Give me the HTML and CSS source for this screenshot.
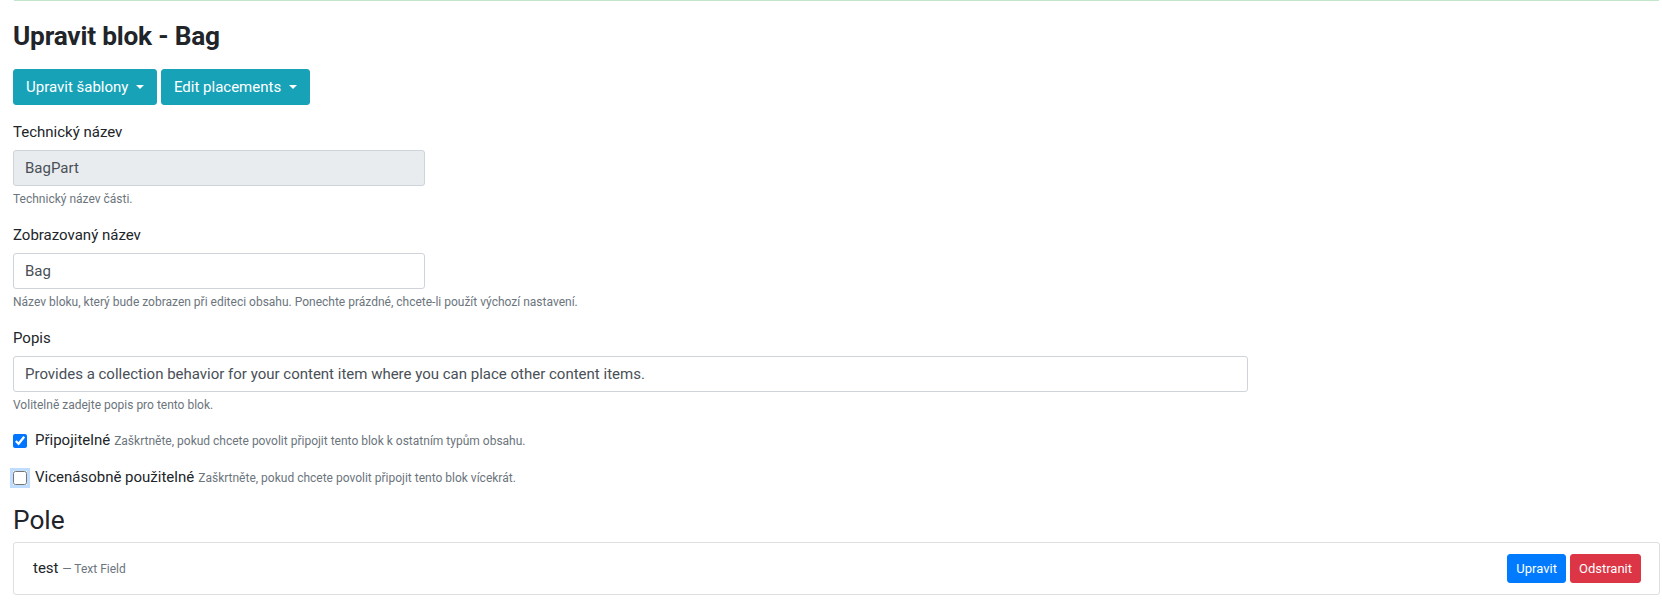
FILE: index.html
```html
<!DOCTYPE html>
<html lang="cs">
<head>
<meta charset="utf-8">
<title>Upravit blok - Bag</title>
<link rel="stylesheet" href="styles.css">
</head>
<body>
<div class="page">
  <div class="alert-edge"></div>
  <h1 class="title">Upravit blok - Bag</h1>
  <div class="toolbar">
    <button class="btn btn-info dropdown-toggle" type="button">Upravit šablony</button>
    <button class="btn btn-info dropdown-toggle" type="button">Edit placements</button>
  </div>

  <div class="form-group narrow">
    <label class="label">Technický název</label>
    <input class="input" type="text" value="BagPart" disabled>
    <small class="hint">Technický název části.</small>
  </div>

  <div class="form-group narrow">
    <label class="label">Zobrazovaný název</label>
    <input class="input" type="text" value="Bag">
    <small class="hint">Název bloku, který bude zobrazen při editeci obsahu. Ponechte prázdné, chcete-li použít výchozí nastavení.</small>
  </div>

  <div class="form-group wide">
    <label class="label">Popis</label>
    <input class="input input-desc" type="text" value="Provides a collection behavior for your content item where you can place other content items.">
    <small class="hint">Volitelně zadejte popis pro tento blok.</small>
  </div>

  <div class="check-row">
    <input class="check" type="checkbox" checked>
    <label class="check-label">Připojitelné</label>
    <span class="check-hint">Zaškrtněte, pokud chcete povolit připojit tento blok k ostatním typům obsahu.</span>
  </div>

  <div class="check-row">
    <input class="check check-focus" type="checkbox">
    <label class="check-label">Vicenásobně použitelné</label>
    <span class="check-hint">Zaškrtněte, pokud chcete povolit připojit tento blok vícekrát.</span>
  </div>

  <h2 class="section">Pole</h2>
  <div class="card">
    <div class="field-name"><span class="name">test</span> <span class="type">— Text Field</span></div>
    <div class="actions">
      <button class="btn btn-sm btn-primary" type="button">Upravit</button>
      <button class="btn btn-sm btn-danger" type="button">Odstranit</button>
    </div>
  </div>
</div>
</body>
</html>
```

FILE: styles.css
```css
* { box-sizing: border-box; }

html, body {
  margin: 0;
  padding: 0;
  background: #fff;
}

body {
  font-family: Roboto, "Noto Sans", "DejaVu Sans", sans-serif;
  font-size: 15px;
  line-height: 1.5;
  color: #212529;
}

.page {
  padding: 0 2px 0 13px;
}

.alert-edge {
  height: 1px;
  margin: 0 1px;
  background: #c3e6cb;
}

.title {
  margin: 20px 0 0;
  font-size: 26.25px;
  line-height: 1.2;
  font-weight: 700;
  letter-spacing: -0.2px;
}

.toolbar {
  display: flex;
  gap: 4px;
  margin-top: 16px;
}

.btn {
  font-family: inherit;
  font-size: 15px;
  line-height: 22px;
  padding: 6px 12px;
  border: 1px solid transparent;
  border-radius: 3px;
  color: #fff;
  cursor: pointer;
}

.btn-info {
  background: #17a2b8;
  border-color: #17a2b8;
}

.dropdown-toggle::after {
  content: "";
  display: inline-block;
  margin-left: 0.5em;
  vertical-align: 0.2em;
  border-top: 0.3em solid;
  border-right: 0.3em solid transparent;
  border-left: 0.3em solid transparent;
}

.form-group {
  display: flex;
  flex-direction: column;
  margin-top: 16px;
}

.narrow { width: 25%; }
.wide { width: 75%; }

.label {
  line-height: 22px;
  margin-bottom: 7px;
}

.input {
  height: 36px;
  padding: 6px 11px;
  font-family: inherit;
  font-size: 15px;
  color: #495057;
  background: #fff;
  border: 1px solid #ced4da;
  border-radius: 3px;
}

.input:disabled {
  background: #e9ecef;
  color: #495057;
}

.hint {
  margin-top: 4px;
  font-size: 12px;
  line-height: 18px;
  color: #6c757d;
  white-space: nowrap;
}

.check-row {
  display: flex;
  align-items: center;
  height: 22px;
  margin-top: 16px;
}

.check-row + .check-row {
  margin-top: 15px;
}

.check {
  width: 14px;
  height: 14px;
  margin: 0 8px 0 0;
  accent-color: #0075ff;
}

.check-focus {
  outline: 3px solid rgba(0, 123, 255, 0.25);
  outline-offset: 0;
  border-radius: 3px;
}

.check-label {
  font-size: 15px;
}

.check-hint {
  margin-left: 4px;
  font-size: 12px;
  color: #6c757d;
}

.section {
  margin: 16px 0 6px;
  font-size: 26.25px;
  line-height: 1.2;
  font-weight: 400;
}

.card {
  display: flex;
  align-items: center;
  justify-content: space-between;
  padding: 11px 18px 11px 19px;
  border: 1px solid rgba(0, 0, 0, 0.125);
  border-radius: 3px;
}

.name {
  font-size: 15px;
}

.type {
  font-size: 12px;
  color: #6c757d;
}

.actions {
  display: flex;
  gap: 4px;
}

.btn-sm {
  font-size: 13px;
  line-height: 19px;
  padding: 4px 8px;
  border-radius: 3px;
}

.btn-primary {
  background: #007bff;
  border-color: #007bff;
}

.btn-danger {
  background: #dc3545;
  border-color: #dc3545;
}
```
